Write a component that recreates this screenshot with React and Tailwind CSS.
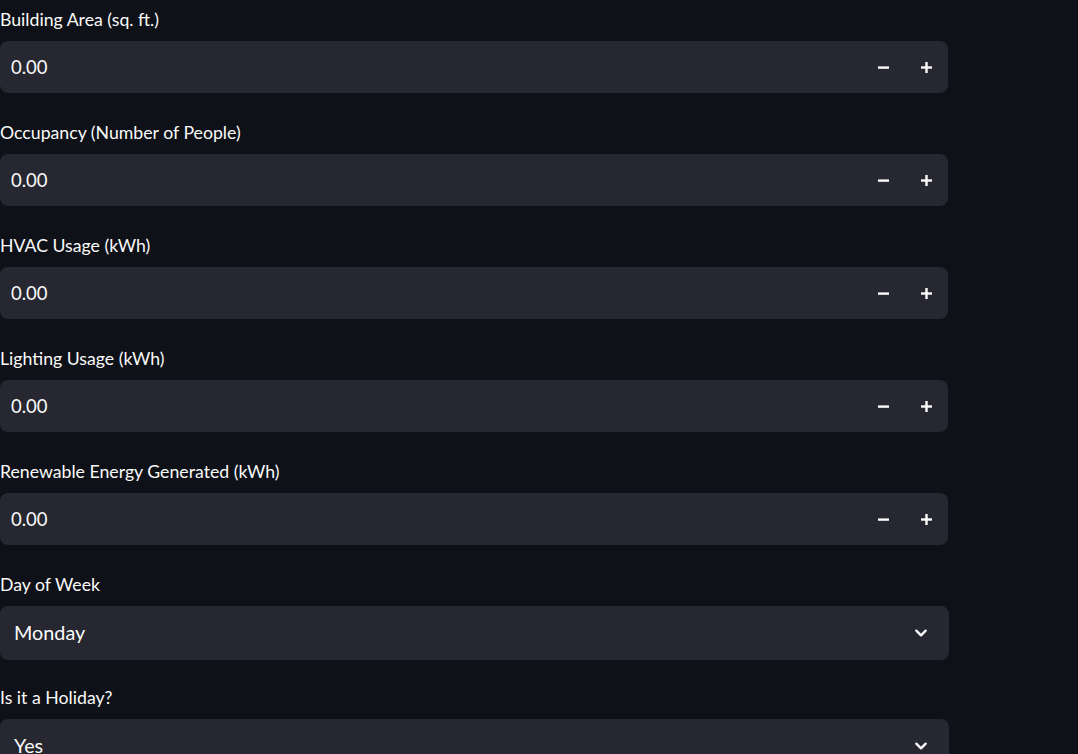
import React from "react";

const font = { fontFamily: "Lato, 'Noto Sans', sans-serif" };

function NumberField({ label }) {
  return (
    <div className="flex flex-col mb-[20px]">
      <div className="h-[38px] pt-[2px] flex items-center text-[17.7px] text-[#fafafa]">{label}</div>
      <div className="mt-[3px] h-[52px] w-[948px] rounded-[8px] bg-[#262730] flex items-center">
        <div className="flex-1 pl-[11px] pt-[2px] text-[18.5px] text-[#fafafa]">0.00</div>
        <div className="w-[43px] h-full flex items-center justify-center">
          <svg width="11" height="11" viewBox="0 0 11 11"><rect x="0" y="4.4" width="11" height="2.4" fill="#fafafa" /></svg>
        </div>
        <div className="w-[43px] h-full flex items-center justify-center">
          <svg width="11" height="11" viewBox="0 0 11 11"><rect x="0" y="4.3" width="11" height="2.4" fill="#fafafa" /><rect x="4.3" y="0" width="2.4" height="11" fill="#fafafa" /></svg>
        </div>
      </div>
    </div>
  );
}

function SelectField({ label, value }) {
  return (
    <div className="flex flex-col mb-[18px]">
      <div className="h-[38px] pt-[2px] flex items-center text-[17.7px] text-[#fafafa]">{label}</div>
      <div className="mt-[3px] h-[54px] w-[949px] rounded-[8px] bg-[#262730] flex items-center">
        <div className="flex-1 pl-[14px] text-[19.8px] text-[#fafafa]">{value}</div>
        <div className="w-[56px] flex items-center justify-center">
          <svg width="16" height="16" viewBox="0 0 24 24" fill="none" stroke="#fafafa" strokeWidth="3.6" strokeLinecap="round" strokeLinejoin="round"><path d="M5 8.5l7 7 7-7" /></svg>
        </div>
      </div>
    </div>
  );
}

export default function App() {
  return (
    <div className="w-[1078px] h-[754px] overflow-hidden bg-[#0e1117]" style={font}>
      <div className="flex flex-col">
        <NumberField label="Building Area (sq. ft.)" />
        <NumberField label="Occupancy (Number of People)" />
        <NumberField label="HVAC Usage (kWh)" />
        <NumberField label="Lighting Usage (kWh)" />
        <NumberField label="Renewable Energy Generated (kWh)" />
        <SelectField label="Day of Week" value="Monday" />
        <SelectField label="Is it a Holiday?" value="Yes" />
      </div>
    </div>
  );
}
